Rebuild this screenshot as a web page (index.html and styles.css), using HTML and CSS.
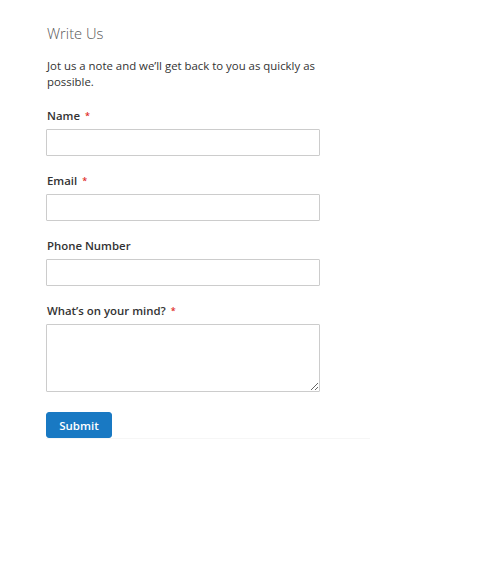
FILE: index.html
```html
<!DOCTYPE html>
<html>
<head>
<meta charset="utf-8">
<link rel="stylesheet" href="styles.css">
</head>
<body>
<div class="form-wrap">
  <h2 class="title">Write Us</h2>
  <p class="note">Jot us a note and we’ll get back to you as quickly as possible.</p>
  <form class="form">
    <div class="field">
      <label class="label">Name <span class="req">*</span></label>
      <input class="input" type="text">
    </div>
    <div class="field">
      <label class="label">Email <span class="req">*</span></label>
      <input class="input" type="text">
    </div>
    <div class="field">
      <label class="label">Phone Number</label>
      <input class="input" type="text">
    </div>
    <div class="field">
      <label class="label">What’s on your mind? <span class="req">*</span></label>
      <textarea class="textarea"></textarea>
    </div>
    <div class="actions">
      <button class="submit" type="button">Submit</button>
    </div>
  </form>
</div>
</body>
</html>
```

FILE: styles.css
```css
html, body {
  margin: 0;
  padding: 0;
  background: #fff;
}
body {
  font-family: "Open Sans", "Liberation Sans", sans-serif;
  color: #333;
}
.form-wrap {
  margin-left: 46px;
  width: 274px;
  padding-top: 22px;
}
.title {
  margin: 0;
  font-size: 14.7px;
  font-weight: 300;
  color: #575757;
  line-height: 22px;
  padding-left: 1px;
}
.note {
  margin: 14px 0 0;
  font-size: 11.4px;
  line-height: 16px;
  color: #333;
  padding-left: 1px;
}
.form {
  margin-top: 18px;
}
.field {
  display: flex;
  flex-direction: column;
  margin-bottom: 17px;
}
.label {
  font-size: 11.4px;
  font-weight: 600;
  line-height: 16px;
  color: #333;
  margin-bottom: 5px;
  padding-left: 1px;
}
.req {
  color: #e02b27;
  font-size: 9px;
  margin-left: 2px;
  vertical-align: 1px;
}
.input {
  box-sizing: border-box;
  width: 274px;
  height: 27px;
  border: 1px solid #cccccc;
  border-radius: 1px;
  margin: 0;
  padding: 0 8px;
  background: #fff;
}
.textarea {
  box-sizing: border-box;
  width: 274px;
  height: 68px;
  border: 1px solid #cccccc;
  border-radius: 1px;
  margin: 0;
  padding: 6px 8px;
  resize: vertical;
  background: #fff;
}
.actions {
  margin-top: 20px;
  width: 324px;
  border-bottom: 1px solid #f6f6f6;
}
.submit {
  font-family: "Open Sans", "Liberation Sans", sans-serif;
  background: #1979c3;
  border: 1px solid #1979c3;
  color: #fff;
  font-size: 11.5px;
  font-weight: 600;
  border-radius: 3px;
  height: 26px;
  width: 66px;
  padding: 0;
  display: block;
}
```
